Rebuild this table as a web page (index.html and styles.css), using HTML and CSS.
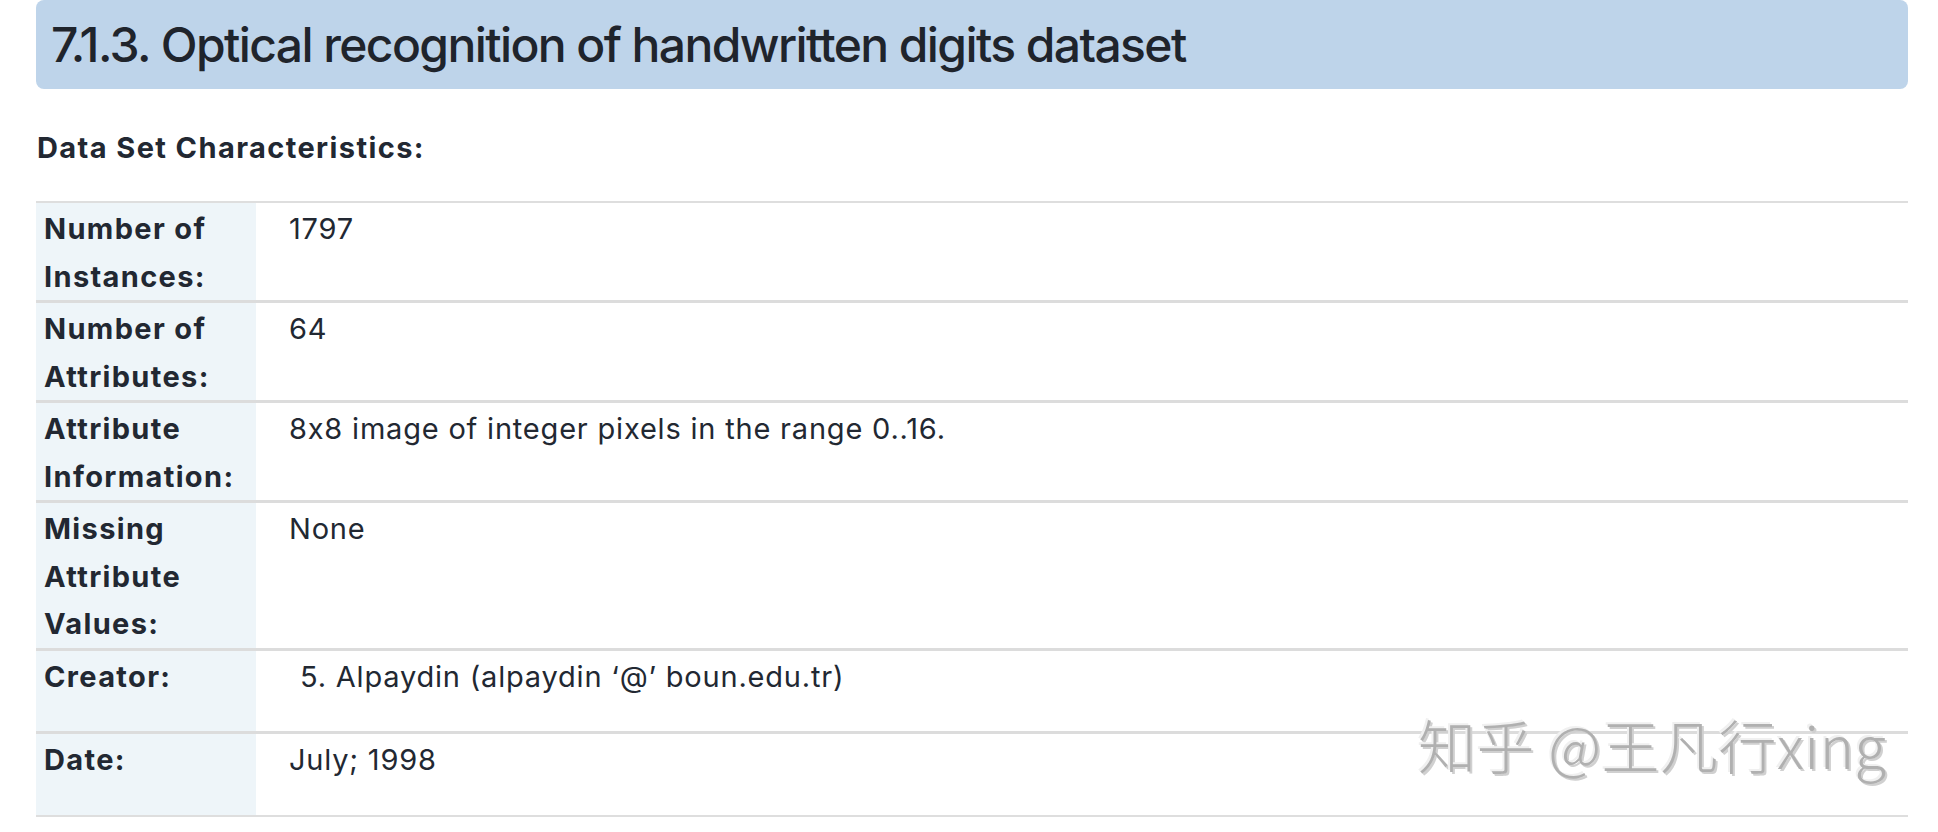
FILE: index.html
```html
<!DOCTYPE html>
<html lang="en">
<head>
<meta charset="utf-8">
<title>Optical recognition of handwritten digits dataset</title>
<link rel="stylesheet" href="styles.css">
</head>
<body>
<main class="page">
  <h2 class="section-title">7.1.3. Optical recognition of handwritten digits dataset</h2>
  <p class="lead"><strong>Data Set Characteristics:</strong></p>
  <table class="field-list">
    <tbody>
      <tr>
        <th>Number of<br>Instances:</th>
        <td>1797</td>
      </tr>
      <tr>
        <th>Number of<br>Attributes:</th>
        <td>64</td>
      </tr>
      <tr>
        <th>Attribute<br>Information:</th>
        <td>8x8 image of integer pixels in the range 0..16.</td>
      </tr>
      <tr>
        <th>Missing<br>Attribute<br>Values:</th>
        <td>None</td>
      </tr>
      <tr class="tall">
        <th>Creator:</th>
        <td class="creator">5. Alpaydin (alpaydin ‘@’ boun.edu.tr)</td>
      </tr>
      <tr class="tall last">
        <th>Date:</th>
        <td>July; 1998</td>
      </tr>
    </tbody>
  </table>
  <div class="watermark">知乎 @王凡行xing</div>
</main>
</body>
</html>
```

FILE: styles.css
```css
html, body {
  margin: 0;
  padding: 0;
  background: #ffffff;
}

body {
  font-family: Inter, "Noto Sans", "Liberation Sans", sans-serif;
  font-feature-settings: "calt" 0;
  color: #222832;
}

.page {
  position: relative;
  padding: 0 30px 0 36px;
  height: 832px;
  box-sizing: border-box;
}

.section-title {
  margin: 0;
  height: 89px;
  box-sizing: border-box;
  padding: 0 15px;
  display: flex;
  align-items: center;
  background: #bed4ea;
  border-radius: 8px;
  font-size: 48px;
  font-weight: 500;
  letter-spacing: -1.6px;
  color: #1f242c;
}

.lead {
  margin: 35px 0 29px 1px;
  font-size: 29px;
  line-height: 48px;
  letter-spacing: 1.4px;
}

.lead strong {
  font-weight: 700;
}

.field-list {
  width: 100%;
  border-collapse: collapse;
  font-size: 29px;
  line-height: 47.5px;
  border-top: 2px solid #dedede;
}

.field-list tr {
  border-bottom: 3px solid #dcdcdc;
}

.field-list tr.last {
  border-bottom: 2px solid #dedede;
}

.field-list th {
  width: 220px;
  box-sizing: border-box;
  padding: 2px 0 0 8px;
  text-align: left;
  vertical-align: top;
  font-weight: 700;
  letter-spacing: 1.35px;
  background: #eef5f9;
}

.field-list td {
  padding: 2px 0 0 33px;
  vertical-align: top;
  font-weight: 400;
  letter-spacing: 0.8px;
}

.field-list tr.tall td,
.field-list tr.tall th {
  padding-bottom: 31px;
}

.field-list tr.last td,
.field-list tr.last th {
  padding-bottom: 31px;
}

.field-list td.creator {
  padding-left: 44px;
}

.watermark {
  position: absolute;
  left: 1418px;
  top: 704px;
  font-family: "Noto Sans CJK SC", "Noto Sans", sans-serif;
  font-size: 58px;
  font-weight: 300;
  letter-spacing: 0.5px;
  line-height: 80px;
  color: #b0b0b0;
  text-shadow: -2px -2px 0 #f0f0f0, 2px 2px 0 #d0d0d0;
  white-space: nowrap;
}
```
